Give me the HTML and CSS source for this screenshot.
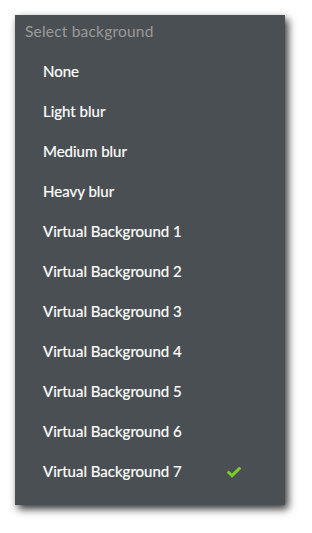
FILE: index.html
```html
<!DOCTYPE html>
<html>
<head>
<meta charset="utf-8">
<link rel="stylesheet" href="styles.css">
</head>
<body>
<div class="menu">
  <div class="menu-header">Select background</div>
  <ul class="menu-list">
    <li class="menu-item">None</li>
    <li class="menu-item">Light blur</li>
    <li class="menu-item">Medium blur</li>
    <li class="menu-item">Heavy blur</li>
    <li class="menu-item">Virtual Background 1</li>
    <li class="menu-item">Virtual Background 2</li>
    <li class="menu-item">Virtual Background 3</li>
    <li class="menu-item">Virtual Background 4</li>
    <li class="menu-item">Virtual Background 5</li>
    <li class="menu-item">Virtual Background 6</li>
    <li class="menu-item selected">Virtual Background 7
      <svg class="check" width="14" height="11" viewBox="0 0 14 11"><path d="M1.8 5.5 L5 8.7 L12.3 1.6" fill="none" stroke="#7ccc2a" stroke-width="3" stroke-linecap="square"/></svg>
    </li>
  </ul>
</div>
</body>
</html>
```
FILE: styles.css
```css
html, body {
  margin: 0;
  padding: 0;
  background: #ffffff;
}
body {
  padding: 15px;
  font-family: Lato, "Open Sans", sans-serif;
}
.menu {
  width: 270px;
  height: 490px;
  box-sizing: border-box;
  background: #4a4f53;
  box-shadow: 3px 4px 8px rgba(0,0,0,0.8);
  padding-bottom: 13px;
}
.menu-header {
  height: 37px;
  line-height: 33px;
  padding-left: 10px;
  color: #9a9b9c;
  font-size: 15.5px;
  letter-spacing: 0.2px;
}
.menu-list {
  list-style: none;
  margin: 0;
  padding: 0;
}
.menu-item {
  height: 40px;
  line-height: 38px;
  padding-left: 28px;
  color: #ffffff;
  font-size: 15px;
  position: relative;
  -webkit-text-stroke: 0.2px #ffffff;
}
.check {
  position: absolute;
  left: 212px;
  top: 15px;
}
```
